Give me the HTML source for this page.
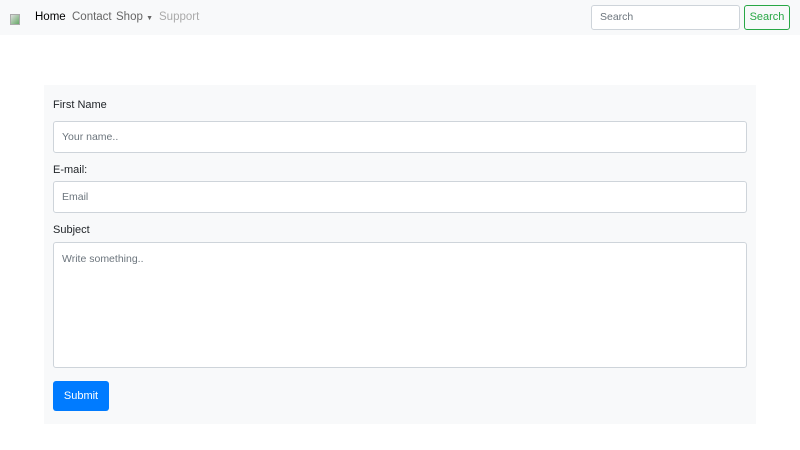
<!DOCTYPE html>
<html><head><style>
*{box-sizing:border-box;margin:0;padding:0}
body{width:800px;height:450px;background:#fff;font-family:"Liberation Sans",sans-serif;font-size:11px;color:#212529;position:relative;overflow:hidden}
.nav{position:absolute;left:0;top:0;width:800px;height:35px;background:#f8f9fa}
.nav span{position:absolute;top:11px;font-size:11.5px}
.in{position:absolute;border:1px solid #ced4da;border-radius:3px;background:#fff;color:#6c757d;font-size:10.5px;padding-left:8px}
.lbl{position:absolute;left:53px;font-size:11px}
</style></head><body>
<div class="nav">
<div style="position:absolute;left:10px;top:14px;width:10px;height:11px;border:1px solid #aaa;background:linear-gradient(135deg,#ddd,#6a6)"></div>
<span style="left:35px;color:#000">Home</span>
<span style="left:72px;color:#666">Contact</span>
<span style="left:116px;color:#666">Shop <span style="position:static;font-size:7px">▼</span></span>
<span style="left:159px;color:#aaa">Support</span>
<div class="in" style="left:591px;top:5px;width:149px;height:25px;line-height:23px">Search</div>
<div style="position:absolute;left:744px;top:5px;width:46px;height:25px;border:1px solid #28a745;border-radius:3px;color:#28a745;font-size:11px;text-align:center;line-height:23px">Search</div>
</div>
<div style="position:absolute;left:44px;top:85px;width:712px;height:339px;background:#f8f9fa"></div>
<div class="lbl" style="top:99px">First Name</div>
<div class="in" style="left:53px;top:121px;width:694px;height:32px;line-height:31px">Your name..</div>
<div class="lbl" style="top:164px">E-mail:</div>
<div class="in" style="left:53px;top:181px;width:694px;height:32px;line-height:31px">Email</div>
<div class="lbl" style="top:224px">Subject</div>
<div class="in" style="left:53px;top:242px;width:694px;height:126px;padding-top:10px">Write something..</div>
<div style="position:absolute;left:53px;top:381px;width:56px;height:30px;background:#007bff;border-radius:3px;color:#fff;font-size:11px;text-align:center;line-height:30px">Submit</div>
</body></html>
